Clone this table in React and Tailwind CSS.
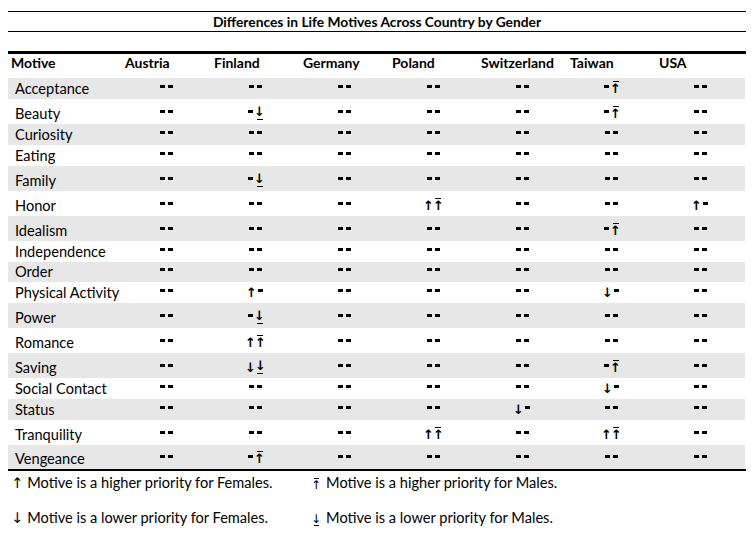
import React from "react"

const countries = ["Austria", "Finland", "Germany", "Poland", "Switzerland", "Taiwan", "USA"]

// two chars per country: female (u/d/-) then male (U/D/-)
const rows = [
    ["Acceptance", 21, "-- -- -- -- -- -U --"],
    ["Beauty", 25, "-- -D -- -- -- -U --"],
    ["Curiosity", 21, "-- -- -- -- -- -- --"],
    ["Eating", 21, "-- -- -- -- -- -- --"],
    ["Family", 25, "-- -D -- -- -- -- --"],
    ["Honor", 25, "-- -- -- uU -- -- u-"],
    ["Idealism", 25, "-- -- -- -- -- -U --"],
    ["Independence", 21, "-- -- -- -- -- -- --"],
    ["Order", 20, "-- -- -- -- -- -- --"],
    ["Physical Activity", 21, "-- u- -- -- -- d- --"],
    ["Power", 25, "-- -D -- -- -- -- --"],
    ["Romance", 25, "-- uU -- -- -- -- --"],
    ["Saving", 25, "-- dD -- -- -- -U --"],
    ["Social Contact", 21, "-- -- -- -- -- d- --"],
    ["Status", 21, "-- -- -- -- d- -- --"],
    ["Tranquility", 25, "-- -- -- uU -- uU --"],
    ["Vengeance", 24, "-- -U -- -- -- -- --"],
]

const heights = {
    21: "h-[21px]",
    25: "h-[25px]",
    20: "h-[20px]",
    24: "h-[24px]",
}

function Dash() {
    return <span className="inline-block w-[5px] h-[3px] bg-black mx-[1.5px] mb-[8px]" />
}

function Arrow({ dir, bar }) {
    return (
        <span className="inline-flex flex-col items-center mx-[-0.5px] mb-[1px]">
            {bar && dir === "up" && <span className="w-[6px] h-[1.5px] bg-black mb-[1px]" />}
            <span className="text-[13px] leading-[12px] font-bold" style={{ fontFamily: "'DejaVu Sans', sans-serif" }}>
                {dir === "up" ? "↑" : "↓"}
            </span>
            {bar && dir === "down" && <span className="w-[6px] h-[1.5px] bg-black mt-[1px]" />}
        </span>
    )
}

function Symbol({ c }) {
    if (c === "-") return <Dash />
    if (c === "u") return <Arrow dir="up" />
    if (c === "d") return <Arrow dir="down" />
    if (c === "U") return <Arrow dir="up" bar />
    return <Arrow dir="down" bar />
}

function LegendMale({ dir }) {
    return (
        <span className="inline-flex flex-col items-center mr-[5px] align-middle">
            {dir === "up" && <span className="w-[5px] h-px bg-black" />}
            <span className="text-[12px] leading-[12px]" style={{ fontFamily: "'DejaVu Sans', sans-serif" }}>
                {dir === "up" ? "↑" : "↓"}
            </span>
            {dir === "down" && <span className="w-[5px] h-px bg-black" />}
        </span>
    )
}

export default function App() {
    return (
        <div className="w-[754px] h-[534px] bg-white text-black overflow-hidden" style={{ fontFamily: "Lato, 'Open Sans', sans-serif" }}>
            <div className="mx-[8px] mt-[11px] w-[738px] h-[21px] border-t border-b border-black flex items-center justify-center">
                <span className="text-[13.8px] font-bold leading-none">Differences in Life Motives Across Country by Gender</span>
            </div>

            <div className="ml-[8px] mt-[19px] w-[738px] border-t-[3px] border-b-2 border-black">
                <div className="flex h-[24px] items-end pb-[8px] text-[14px] font-bold leading-none">
                    <div className="w-[114px] pl-[3px]">Motive</div>
                    {countries.map((c) => (
                        <div key={c} className="w-[89px] pl-[3px]">{c}</div>
                    ))}
                </div>

                {rows.map(([name, h, data], i) => (
                    <div key={name} className={`flex items-end w-[737px] ${heights[h]} ${i % 2 === 0 ? "bg-[#e7e7e7]" : "bg-white"}`}>
                        <div className="w-[114px] pl-[7px] pb-[2px] text-[14.6px] leading-none">{name}</div>
                        {data.split(" ").map((pair, j) => (
                            <div key={j} className="w-[89px] flex justify-center items-end pb-[3px]">
                                <Symbol c={pair[0]} />
                                <Symbol c={pair[1]} />
                            </div>
                        ))}
                    </div>
                ))}
            </div>

            <div className="grid grid-cols-[300px_1fr] gap-y-[19px] pl-[11px] pt-[4px] text-[14.6px] leading-[16px]">
                <div><span className="mr-[4px]" style={{ fontFamily: "'DejaVu Sans', sans-serif" }}>↑</span>Motive is a higher priority for Females.</div>
                <div><LegendMale dir="up" />Motive is a higher priority for Males.</div>
                <div><span className="mr-[4px]" style={{ fontFamily: "'DejaVu Sans', sans-serif" }}>↓</span>Motive is a lower priority for Females.</div>
                <div><LegendMale dir="down" />Motive is a lower priority for Males.</div>
            </div>
        </div>
    )
}
